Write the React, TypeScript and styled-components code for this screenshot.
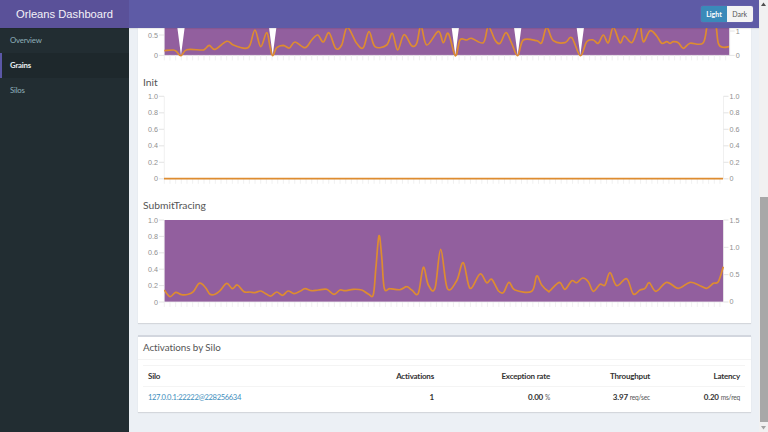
import React from "react";
import styled, { createGlobalStyle } from "styled-components";

type Pt = [number, number];

const Global = createGlobalStyle`
  html, body { margin: 0; padding: 0; background: #ecf0f5; }
  body { font-family: Lato, "Open Sans", sans-serif; font-size: 8px; color: #333; overflow: hidden; }
  * { box-sizing: border-box; }
`;

const Shell = styled.div`
  display: grid;
  grid-template-columns: 759px 9px;
  width: 768px;
  height: 432px;
  overflow: hidden;
`;
const Page = styled.div`
  display: flex;
  flex-direction: column;
  min-width: 0;
  height: 432px;
`;
const Header = styled.header`
  display: flex;
  flex: 0 0 28px;
  height: 28px;
  background: #5e5ba6;
  box-shadow: 0 1px 1px rgba(0, 0, 0, 0.08);
  position: relative;
  z-index: 2;
`;
const Logo = styled.div`
  flex: 0 0 129px;
  background: #5a5199;
  color: #f4f1f8;
  font: 11.2px/28px "Liberation Sans", Arial, sans-serif;
  text-align: center;
`;
const Navbar = styled.div`
  flex: 1;
  display: flex;
  justify-content: flex-end;
  align-items: flex-start;
  padding: 5.5px 6.5px 0 0;
`;
const ThemeGroup = styled.div`
  display: flex;
  height: 16.5px;
  border-radius: 2px;
  overflow: hidden;
  box-shadow: 0 0 1px rgba(255, 255, 255, 0.4);
`;
const ThemeButton = styled.button<{ $active?: boolean }>`
  width: ${(p) => (p.$active ? 26 : 25.5)}px;
  border: 0;
  padding: 0;
  font: ${(p) => (p.$active ? 700 : 400)} 7px Lato, sans-serif;
  background: ${(p) => (p.$active ? "#3a8ab9" : "#f4f4f4")};
  color: ${(p) => (p.$active ? "#fff" : "#555")};
`;
const Body = styled.div`
  flex: 1;
  display: flex;
  min-height: 0;
`;
const Sidebar = styled.nav`
  flex: 0 0 129px;
  background: #222d32;
`;
const MenuItem = styled.a<{ $active?: boolean }>`
  display: block;
  height: 25px;
  line-height: 25px;
  padding-left: ${(p) => (p.$active ? 8 : 10)}px;
  font-size: 7.8px;
  letter-spacing: -0.2px;
  border-left: ${(p) => (p.$active ? "2px solid #5b57a6" : "0")};
  background: ${(p) => (p.$active ? "#1e282c" : "transparent")};
  color: ${(p) => (p.$active ? "#e8eef0" : "#8fb0ba")};
  font-weight: ${(p) => (p.$active ? 700 : 400)};
`;
const Content = styled.main`
  flex: 1;
  min-width: 0;
  padding: 0 8px 0 9px;
  overflow: hidden;
`;
const Card = styled.section<{ $topBorder?: boolean }>`
  background: #fff;
  box-shadow: 0 1px 1px rgba(0, 0, 0, 0.1);
  border-top: ${(p) => (p.$topBorder ? "2px solid #d2d6de" : "0")};
  margin-bottom: 12px;
`;
const ChartsCard = styled(Card)`
  height: 295px;
  padding: 0 5px;
`;
const ChartTitle = styled.h3`
  margin: 0;
  height: 14px;
  font-size: 10.3px;
  line-height: 14px;
  font-weight: 400;
  color: #555;
`;
const ChartSvg = styled.svg`
  display: block;
`;
const AxisText = styled.text`
  font: 7.2px "Liberation Sans", Arial, sans-serif;
  fill: #8f8f8f;
  dominant-baseline: central;
`;
const BoxTitle = styled.h3`
  margin: 0;
  height: 23px;
  padding-left: 5px;
  font-size: 9.8px;
  letter-spacing: -0.05px;
  line-height: 20px;
  font-weight: 400;
  color: #555;
  border-bottom: 1px solid #f4f4f4;
`;
const TableWrap = styled.div`
  padding: 5px 6px 5px 5px;
`;
const Row = styled.div<{ $head?: boolean }>`
  display: grid;
  grid-template-columns: 200px 96px 116px 100px 90px;
  height: 21px;
  align-items: center;
  border-top: ${(p) => (p.$head ? "1px solid #f4f4f4" : "1px solid #f4f4f4")};
  font-weight: ${(p) => (p.$head ? 700 : 400)};
  letter-spacing: -0.2px;
`;
const Cell = styled.div<{ $left?: boolean }>`
  padding: 0 5px;
  text-align: ${(p) => (p.$left ? "left" : "right")};
  white-space: nowrap;
`;
const SiloLink = styled.a`
  color: #3c8dbc;
  font-size: 7.6px;
  letter-spacing: -0.35px;
`;
const Strong = styled.b`
  font-weight: 700;
`;
const Unit = styled.small`
  font-size: 6.6px;
  color: #555;
`;
const Scrollbar = styled.aside`
  display: flex;
  flex-direction: column;
  background: #f1f1f1;
`;
const ScrollTrack = styled.div`
  flex: 1;
  padding: 188px 0.5px 0 0.5px;
`;
const Thumb = styled.div`
  height: 225px;
  background: #a8a8a8;
`;
const ArrowBox = styled.svg`
  display: block;
  flex: 0 0 9px;
  width: 9px;
  height: 9px;
`;

const z = (x0: number, y0: number, pts: number[][]): Pt[] =>
  pts.map(([x, y]) => [x0 + x / 3, y0 + y / 3] as Pt);

function smooth(p: Pt[]): string {
  let d = `M${p[0][0].toFixed(1)} ${p[0][1].toFixed(1)}`;
  for (let i = 0; i < p.length - 1; i++) {
    const a = p[Math.max(0, i - 1)];
    const b = p[i];
    const c = p[i + 1];
    const e = p[Math.min(p.length - 1, i + 2)];
    const k = 0.17;
    const c1: Pt = [b[0] + (c[0] - a[0]) * k, b[1] + (c[1] - a[1]) * k];
    const c2: Pt = [c[0] - (e[0] - b[0]) * k, c[1] - (e[1] - b[1]) * k];
    d += `C${c1[0].toFixed(1)} ${c1[1].toFixed(1)} ${c2[0].toFixed(1)} ${c2[1].toFixed(1)} ${c[0].toFixed(1)} ${c[1].toFixed(1)}`;
  }
  return d;
}

const line1: Pt[] = [
  ...z(130, 0, [[103,152],[130,150],[140,155],[153,167],[170,149],[215,150],[225,147],[238,136],[255,148],[290,124],[310,135],[345,145],[360,135],[375,90],[392,140],[410,98],[420,140],[428,167],[440,143],[460,136],[478,144],[495,126],[525,143],[545,120],[563,105],[580,126],[597,98],[617,145],[635,135],[652,82],[680,130],[700,143],[717,95],[735,140],[770,135],[787,100],[803,150],[822,104],[845,137],[860,130],[873,78],[890,135],[925,94],[940,128]]),
  ...z(440, 0, [[25,100],[46,167],[60,120],[80,120],[95,115],[130,128],[145,80],[165,120],[180,130],[198,98],[215,130],[233,167],[250,120],[290,122],[305,128],[320,82],[340,122],[375,128],[395,113],[421,167],[440,125],[460,120],[475,130],[490,105],[505,128],[520,82],[540,128],[553,108],[575,128],[590,95],[600,70],[610,125],[630,92],[650,108],[665,130],[680,125],[690,130],[700,125],[715,128],[730,145],[750,130],[790,128],[805,60],[825,60],[835,130],[850,142],[867,140]]),
];

const line3: Pt[] = [
  ...z(130, 190, [[103,300],[120,320],[137,307],[155,314],[175,313],[190,305],[205,282],[215,281],[228,295],[240,313],[255,313],[270,302],[290,280],[307,296],[322,285],[342,305],[360,306],[375,308],[392,303],[410,313],[423,318],[440,306],[458,316],[474,303],[492,311],[510,304],[525,296],[545,302],[565,300],[590,298],[612,313],[630,300]]),
  ...z(340, 200, [[15,272],[40,268],[65,270],[85,282],[100,284],[108,200],[117,107],[125,170],[133,265],[150,266],[180,269],[200,260],[215,270],[235,280],[250,202],[265,255],[285,265],[302,148],[322,265],[350,242],[370,188],[390,265],[420,222],[440,248],[455,238],[475,272],[490,278],[507,247],[525,270],[575,274],[590,228],[605,255],[625,274]]),
  ...z(550, 200, [[0,272],[28,247],[45,268],[65,242],[80,248],[98,234],[115,245],[130,274],[150,253],[165,255],[180,218],[200,257],[230,236],[250,282],[270,270],[285,265],[298,248],[318,274],[350,247],[385,265],[420,247],[450,257],[470,265],[490,250],[505,245],[520,200]]),
];

const notches = [181, 272.7, 455.3, 517.7, 580.3];

type Label = { y: number; t: string };
type ChartProps = {
  top: number;
  height: number;
  plotTop: number;
  plotBottom: number;
  plotRight: number;
  left: Label[];
  right: Label[];
  area?: string;
  line: string;
};

function Chart({ top, height, plotTop, plotBottom, plotRight, left, right, area, line }: ChartProps) {
  const ticks: number[] = [];
  for (let x = 164.3; x <= plotRight + 0.5; x += 5.67) ticks.push(x);
  const clip = `clip${top}`;
  return (
    <ChartSvg width={603} height={height} viewBox={`143 ${top} 603 ${height}`}>
      <clipPath id={clip}>
        <rect x={164} y={plotTop} width={plotRight - 164 + 1} height={plotBottom - plotTop + 1.5} />
      </clipPath>
      {area && <path d={area} fill="#925f9e" />}
      <g stroke="#ececec" strokeWidth={0.8}>
        {ticks.map((x) => (
          <line key={x} x1={x} x2={x} y1={plotBottom} y2={plotBottom + 5} />
        ))}
        <line x1={164.3} x2={164.3} y1={plotTop} y2={plotBottom} />
        <line x1={plotRight} x2={plotRight} y1={plotTop} y2={plotBottom} />
        <line x1={164} x2={plotRight} y1={plotBottom} y2={plotBottom} />
        {left.map((l) => (
          <line key={l.t} x1={159} x2={164} y1={l.y} y2={l.y} stroke="#ddd" />
        ))}
        {right.map((l) => (
          <line key={l.t} x1={plotRight} x2={plotRight + 5} y1={l.y} y2={l.y} stroke="#ddd" />
        ))}
      </g>
      {left.map((l) => (
        <AxisText key={l.t} x={158} y={l.y} textAnchor="end">
          {l.t}
        </AxisText>
      ))}
      {right.map((l) => (
        <AxisText key={l.t} x={plotRight + 6} y={l.y}>
          {l.t}
        </AxisText>
      ))}
      <path d={line} clipPath={`url(#${clip})`} fill="none" stroke="#de8c30" strokeWidth={1.7} strokeLinejoin="round" />
    </ChartSvg>
  );
}

const firstArea = (() => {
  const base = 55.4;
  let d = `M164 ${base}L164 28`;
  notches.forEach((n) => {
    d += `L${n - 3.6} 28L${n} ${base}L${n + 3.6} 28`;
  });
  return d + `L729.5 28L729.5 ${base}Z`;
})();

const lab = (y0: number, step: number, list: string[]): Label[] =>
  list.map((t, i) => ({ t, y: y0 + step * i }));

const initLabels = lab(96.3, 16.5, ["1.0", "0.8", "0.6", "0.4", "0.2", "0"]);
const subLeft = lab(220, 16.4, ["1.0", "0.8", "0.6", "0.4", "0.2", "0"]);
const subRight = lab(220, 27.33, ["1.5", "1.0", "0.5", "0"]);

const rows = [
  { silo: "127.0.0.1:22222@228256634", act: "1", ex: "0.00", tp: "3.97", lat: "0.20" },
];

export default function App() {
  return (
    <>
      <Global />
      <Shell>
        <Page>
          <Header>
            <Logo>Orleans Dashboard</Logo>
            <Navbar>
              <ThemeGroup>
                <ThemeButton $active>Light</ThemeButton>
                <ThemeButton>Dark</ThemeButton>
              </ThemeGroup>
            </Navbar>
          </Header>
          <Body>
            <Sidebar>
              <MenuItem>Overview</MenuItem>
              <MenuItem $active>Grains</MenuItem>
              <MenuItem>Silos</MenuItem>
            </Sidebar>
            <Content>
              <ChartsCard>
                <Chart
                  top={28}
                  height={47}
                  plotTop={22}
                  plotBottom={55.4}
                  plotRight={729.7}
                  left={[{ y: 35, t: "0.5" }, { y: 55.4, t: "0" }]}
                  right={[{ y: 31, t: "1" }, { y: 55.4, t: "0" }]}
                  area={firstArea}
                  line={smooth(line1)}
                />
                <ChartTitle>Init</ChartTitle>
                <Chart
                  top={89}
                  height={109}
                  plotTop={96.3}
                  plotBottom={178.8}
                  plotRight={723.5}
                  left={initLabels}
                  right={initLabels}
                  line="M164 178.6L723 178.6"
                />
                <ChartTitle>SubmitTracing</ChartTitle>
                <Chart
                  top={212}
                  height={100}
                  plotTop={220}
                  plotBottom={302}
                  plotRight={723.5}
                  left={subLeft}
                  right={subRight}
                  area="M164 220H723.5V302H164Z"
                  line={smooth(line3)}
                />
              </ChartsCard>
              <Card $topBorder>
                <BoxTitle>Activations by Silo</BoxTitle>
                <TableWrap>
                  <Row $head>
                    <Cell $left>Silo</Cell>
                    <Cell>Activations</Cell>
                    <Cell>Exception rate</Cell>
                    <Cell>Throughput</Cell>
                    <Cell>Latency</Cell>
                  </Row>
                  {rows.map((r) => (
                    <Row key={r.silo}>
                      <Cell $left>
                        <SiloLink>{r.silo}</SiloLink>
                      </Cell>
                      <Cell>
                        <Strong>{r.act}</Strong>
                      </Cell>
                      <Cell>
                        <Strong>{r.ex}</Strong> <Unit>%</Unit>
                      </Cell>
                      <Cell>
                        <Strong>{r.tp}</Strong> <Unit>req/sec</Unit>
                      </Cell>
                      <Cell>
                        <Strong>{r.lat}</Strong> <Unit>ms/req</Unit>
                      </Cell>
                    </Row>
                  ))}
                </TableWrap>
              </Card>
            </Content>
          </Body>
        </Page>
        <Scrollbar>
          <ArrowBox viewBox="0 0 9 9">
            <path d="M4.5 2.5L7 6H2Z" fill="#505050" />
          </ArrowBox>
          <ScrollTrack>
            <Thumb />
          </ScrollTrack>
          <ArrowBox viewBox="0 0 9 9">
            <path d="M4.5 6.5L7 3H2Z" fill="#a3a3a3" />
          </ArrowBox>
        </Scrollbar>
      </Shell>
    </>
  );
}
